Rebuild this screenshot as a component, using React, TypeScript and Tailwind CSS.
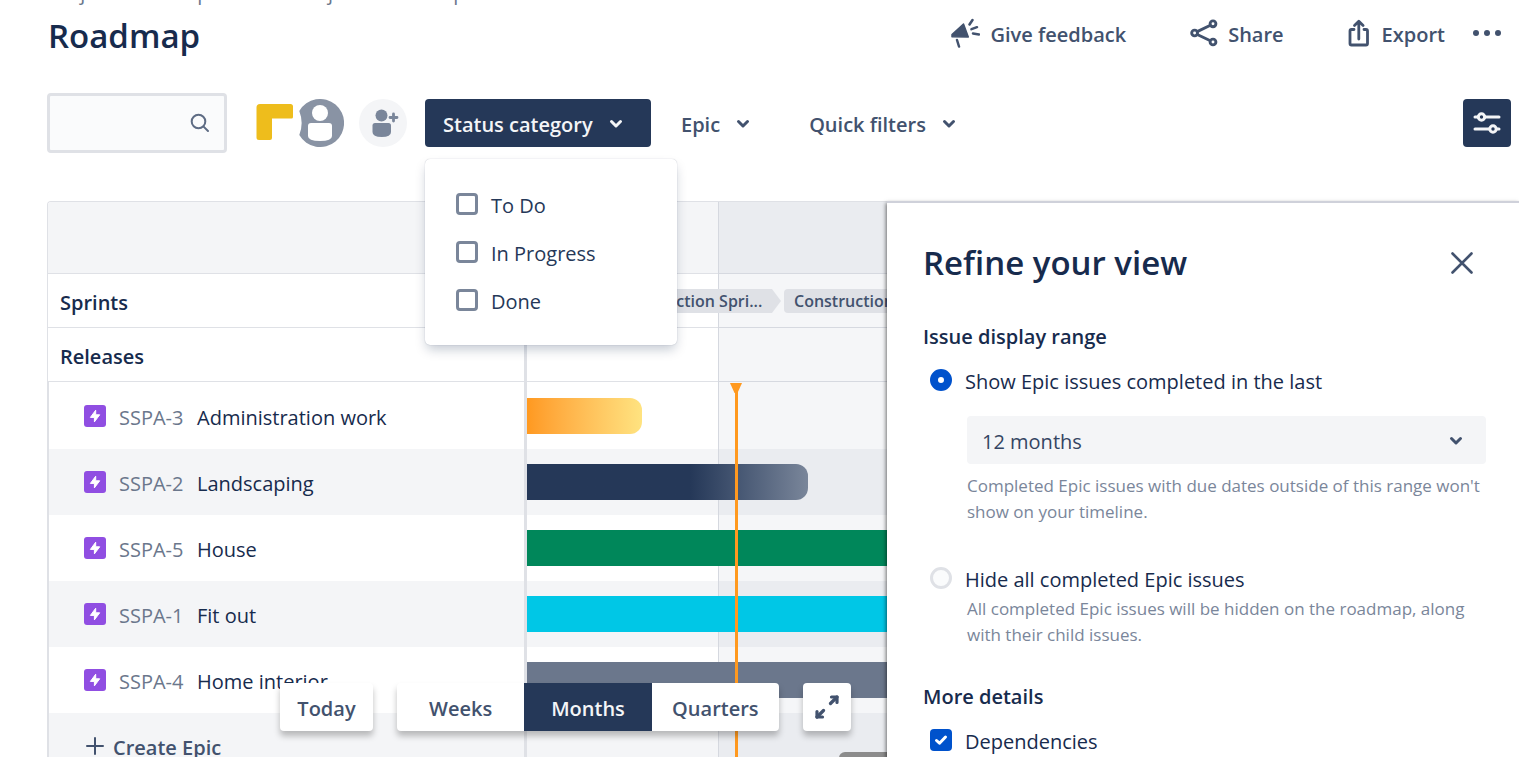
import { useState } from "react";
import type { ReactNode } from "react";

type Epic = { key: string; name: string; bar: string };

const EPICS: Epic[] = [
  { key: "SSPA-3", name: "Administration work", bar: "w-[115px] rounded-r-[12px] bg-linear-to-r from-[#ff991f] to-[#ffe380]" },
  { key: "SSPA-2", name: "Landscaping", bar: "w-[281px] rounded-r-[12px] bg-linear-to-r from-[#253858] from-58% to-[#7a869a]" },
  { key: "SSPA-5", name: "House", bar: "w-full bg-[#00875a]" },
  { key: "SSPA-1", name: "Fit out", bar: "w-full bg-[#00c7e6]" },
  { key: "SSPA-4", name: "Home interior", bar: "w-full bg-[#6b778c]" },
];

const STATUSES = ["To Do", "In Progress", "Done"];

function Chevron({ className = "" }: { className?: string }) {
  return (
    <svg width="14" height="12" viewBox="0 0 14 12" fill="none" stroke="currentColor" strokeWidth="3" strokeLinecap="round" strokeLinejoin="round" className={className} aria-hidden="true">
      <path d="M2.500 4.500 7 9l4.500-4.500" />
    </svg>
  );
}

function Megaphone() {
  return (
    <svg width="30" height="30" viewBox="0 0 30 30" fill="none" stroke="currentColor" strokeWidth="2.500" strokeLinecap="round" aria-hidden="true">
      <path d="M13.500 6 2 16.500v2.200L18.300 19z" fill="currentColor" strokeLinejoin="round" strokeWidth="1.500" />
      <path d="M7 22l2 6.500M19.500 6.500l3-4.500M21.500 11.200l5.500-2M23 15.500l6 .9" />
    </svg>
  );
}

function ShareIcon() {
  return (
    <svg width="28" height="28" viewBox="0 0 28 28" fill="none" stroke="currentColor" strokeWidth="2.900" aria-hidden="true">
      <circle cx="4.600" cy="14" r="2.900" />
      <circle cx="23" cy="4.800" r="2.900" />
      <circle cx="23" cy="23" r="2.900" />
      <path d="M7.200 12.600 20.400 6.200M7.200 15.500l13.200 6.200" />
    </svg>
  );
}

function ExportIcon() {
  return (
    <svg width="22" height="28" viewBox="0 0 22 28" fill="none" stroke="currentColor" strokeWidth="2.800" strokeLinecap="round" strokeLinejoin="round" aria-hidden="true">
      <path d="M6 10.500H3.500A1.500 1.500 0 0 0 2 12v12.500A1.500 1.500 0 0 0 3.500 26h14.500a1.500 1.500 0 0 0 1.500-1.500V12a1.500 1.500 0 0 0-1.500-1.500H16" />
      <path d="M10.800 20V3M6.500 6.500 10.800 2.200l4.300 4.300" />
    </svg>
  );
}

function EpicIcon() {
  return (
    <svg width="22" height="22" viewBox="0 0 22 22" className="shrink-0" aria-hidden="true">
      <rect width="22" height="22" rx="3" fill="#904ee2" />
      <path d="M11.700 5.200v4.600h4L10.400 16.900v-4.500h-4z" fill="#fff" stroke="#fff" strokeWidth="1" strokeLinejoin="round" />
    </svg>
  );
}

function FilterButton({ children }: { children: ReactNode }) {
  return (
    <button type="button" className="flex h-12 items-center gap-4 font-semibold text-[#42526e]">
      <span className="pt-[3px]">{children}</span>
      <Chevron />
    </button>
  );
}

function Header() {
  return (
    <header className="flex h-[60px] items-start pl-12 pr-[18px]">
      <h1 className="mt-3 text-[33px] leading-[48px] font-semibold">Roadmap</h1>
      <div className="mt-[17px] ml-auto flex h-8 items-center font-semibold text-[#42526e]">
        <button type="button" className="flex items-center gap-[10px]"><Megaphone /><span className="pt-[3px]">Give feedback</span></button>
        <button type="button" className="ml-16 flex items-center gap-[10px]"><ShareIcon /><span className="pt-[3px]">Share</span></button>
        <button type="button" className="ml-16 flex items-center gap-3"><ExportIcon /><span className="pt-[3px]">Export</span></button>
        <button type="button" aria-label="More actions" className="ml-7">
          <svg width="28" height="8" viewBox="0 0 28 8" fill="currentColor" aria-hidden="true">
            <circle cx="3" cy="4" r="3" /><circle cx="14" cy="4" r="3" /><circle cx="25" cy="4" r="3" />
          </svg>
        </button>
      </div>
    </header>
  );
}

function StatusFilter() {
  const [checked, setChecked] = useState<string[]>([]);
  const toggle = (s: string) => setChecked((c) => (c.includes(s) ? c.filter((x) => x !== s) : [...c, s]));
  return (
    <div className="relative ml-[18px]">
      <button type="button" aria-expanded="true" className="flex h-12 w-[226px] items-center gap-4 rounded-[4px] bg-[#253858] pl-[18px] font-semibold text-[#f4f5f7]">
        <span className="pt-[3px]">Status category</span>
        <Chevron />
      </button>
      <div className="absolute top-[60px] left-0 z-30 w-[252px] rounded-[5px] bg-white py-[21px] pl-[31px] text-[#253858] shadow-[0_6px_12px_-2px_rgba(9,30,66,0.25),0_0_1px_rgba(9,30,66,0.31)]">
        {STATUSES.map((s) => (
          <label key={s} className="flex h-12 items-center gap-[13px]">
            <input type="checkbox" checked={checked.includes(s)} onChange={() => toggle(s)} className="h-[22px] w-[22px] appearance-none rounded-[4px] border-3 border-[#7a869a] bg-white checked:bg-[#0052cc]" />
            <span className="pt-[3px]">{s}</span>
          </label>
        ))}
      </div>
    </div>
  );
}

function Filters() {
  return (
    <div className="flex h-[60px] items-center pl-[47px] pr-2">
      <label className="flex h-[60px] w-[180px] items-center rounded-[4px] border-3 border-[#dfe1e6] bg-[#fafbfc] pr-[14px] pl-3">
        <input type="search" aria-label="Search roadmap" className="min-w-0 flex-1 bg-transparent outline-none" />
        <svg width="20" height="20" viewBox="0 0 20 20" fill="none" stroke="#5e6c84" strokeWidth="2" strokeLinecap="round" aria-hidden="true">
          <circle cx="8.500" cy="8.500" r="6.800" /><path d="M13.600 13.600 18 18" />
        </svg>
      </label>
      <div className="ml-[29px] flex items-center">
        <svg width="88" height="48" viewBox="0 0 88 48" role="img" aria-label="Assignees">
          <path d="M4 5h30.500a2.500 2.500 0 0 1 2.500 2.500V18a1.500 1.500 0 0 1-1.500 1.500H16V39a2 2 0 0 1-2 2H3a2.500 2.500 0 0 1-2.500-2.500v-30A3.500 3.500 0 0 1 4 5z" fill="#eebd1c" />
          <path d="M43.300 12A24 24 0 1 1 43.300 36Q48 24 43.300 12z" fill="#8993a4" />
          <circle cx="64" cy="14" r="8" fill="#fff" />
          <path d="M52 27a3 3 0 0 1 3-3h18a3 3 0 0 1 3 3v10q0 5-12 5t-12-5z" fill="#fff" />
        </svg>
        <button type="button" aria-label="Add people" className="ml-[15px] grid h-12 w-12 place-items-center rounded-full bg-[#f4f5f7]">
          <svg width="48" height="48" viewBox="0 0 48 48" fill="#7a869a" aria-hidden="true">
            <circle cx="22.500" cy="16.500" r="6" />
            <path d="M13.500 26.500a2.500 2.500 0 0 1 2.500-2.500h13.500a2.500 2.500 0 0 1 2.500 2.500v6.500q0 5-9.250 5t-9.250-5z" />
            <path d="M34.500 15v7M31 18.500h7" stroke="#7a869a" strokeWidth="2.800" strokeLinecap="round" />
          </svg>
        </button>
      </div>
      <StatusFilter />
      <div className="ml-[30px] flex gap-[59px]">
        <FilterButton>Epic</FilterButton>
        <FilterButton>Quick filters</FilterButton>
      </div>
      <button type="button" aria-label="View settings" className="ml-auto grid h-12 w-12 place-items-center rounded-[4px] bg-[#253858]">
        <svg width="28" height="24" viewBox="0 0 28 24" fill="none" stroke="#f4f5f7" strokeWidth="3" aria-hidden="true">
          <path d="M2 6h3M12 6h14M2 18h14.500M23.500 18H26" strokeLinecap="round" />
          <circle cx="8.500" cy="6" r="3.200" /><circle cx="20" cy="18" r="3.200" />
        </svg>
      </button>
    </div>
  );
}

function EpicList() {
  return (
    <div className="w-[477px] shrink-0 overflow-hidden rounded-tl-[4px] border-t border-l border-[#dfe1e6]">
      <div className="h-18 border-b border-[#dfe1e6] bg-[#f4f5f7]" />
      <h2 className="flex h-[54px] items-center border-b border-[#dfe1e6] pl-3 pt-[5px] font-semibold">Sprints</h2>
      <h2 className="flex h-[54px] items-center border-b border-[#dfe1e6] pl-3 pt-[5px] font-semibold">Releases</h2>
      <ul className="border-l border-[#dfe1e6] pt-px">
        {EPICS.map((e) => (
          <li key={e.key} className="flex h-[66px] items-center pl-[35px] even:bg-[#f4f5f7]">
            <EpicIcon />
            <a href="#" className="ml-[13px] w-[78px] pt-[3px] text-[#6b778c]">{e.key}</a>
            <span className="pt-[3px]">{e.name}</span>
          </li>
        ))}
        <li className="h-[66px] bg-[#f4f5f7]">
          <button type="button" className="flex h-full items-center gap-2 pl-9 font-semibold text-[#42526e]">
            <svg width="20" height="20" viewBox="0 0 20 20" stroke="currentColor" strokeWidth="2" strokeLinecap="round" aria-hidden="true">
              <path d="M10 2v16M2 10h16" />
            </svg>
            <span className="pt-[3px]">Create Epic</span>
          </button>
        </li>
      </ul>
    </div>
  );
}

function Timeline() {
  const sprint = "h-6 w-[176px] shrink-0 rounded-l-[4px] bg-[#dfe1e6] pl-[10px] [clip-path:polygon(0_0,calc(100%-9px)_0,100%_50%,calc(100%-9px)_100%,0_100%)]";
  return (
    <div className="relative min-w-0 flex-1 overflow-hidden border-t border-l-3 border-t-[#dfe1e6] border-l-[#dfe1e6]">
      <div className="h-18 border-b border-[#dfe1e6] bg-[#f4f5f7]" />
      <div className="h-[54px] border-b border-[#dfe1e6]" />
      <div className="h-[54px] border-b border-[#dfe1e6]" />
      <div className="absolute inset-y-0 left-[191px] w-full border-l border-[#d5d8df] bg-[rgba(9,30,66,0.04)]" />
      <div className="absolute top-[87px] left-[78px] flex gap-[3px] text-[16px] leading-6 font-semibold whitespace-nowrap text-[#42526e]">
        <span className={sprint}>Construction Spri...</span>
        <span className={sprint}>Construction Spri...</span>
      </div>
      <div className="pt-px">
        {EPICS.map((e) => (
          <div key={e.key} className="flex h-[66px] items-center even:bg-[rgba(9,30,66,0.045)]">
            <div className={`relative h-9 ${e.bar}`} />
          </div>
        ))}
        <div className="h-[66px] bg-[rgba(9,30,66,0.045)]" />
      </div>
      <div className="absolute top-[181px] bottom-0 left-[203px] flex w-3 flex-col items-center">
        <svg width="12" height="12" viewBox="0 0 12 12" className="shrink-0" aria-hidden="true"><path d="M0 0h12L7.500 10h-3z" fill="#ff991f" /></svg>
        <div className="-mt-3 w-[3px] flex-1 bg-[#ff991f]" />
      </div>
      <div className="absolute right-0 top-[550px] h-3 w-12 rounded-tl-[6px] bg-[#8c8c8c]" />
    </div>
  );
}

function RefinePanel() {
  const [hide, setHide] = useState(false);
  const radio = "h-[22px] w-[22px] shrink-0 appearance-none rounded-full border-3 border-[#dfe1e6] bg-[#fafbfc] checked:border-8 checked:border-[#0052cc] checked:bg-white";
  return (
    <aside className="relative z-10 w-[632px] shrink-0 border-t-2 border-[#cfd1da] bg-white pr-[33px] pl-9 shadow-[-1px_2px_4px_rgba(0,0,0,0.55)]">
      <div className="flex items-center pt-9">
        <h2 className="text-[33px] leading-[48px] font-semibold">Refine your view</h2>
        <button type="button" aria-label="Close" className="ml-auto mr-3">
          <svg width="24" height="24" viewBox="0 0 24 24" stroke="#42526e" strokeWidth="2.600" strokeLinecap="round" aria-hidden="true">
            <path d="M2.500 2.500l19 19M21.500 2.500l-19 19" />
          </svg>
        </button>
      </div>
      <h3 className="mt-[34px] leading-8 font-semibold">Issue display range</h3>
      <label className="mt-[11px] flex h-8 items-center gap-[13px] pl-[7px]">
        <input type="radio" name="range" checked={!hide} onChange={() => setHide(false)} className={radio} />
        <span className="pt-[3px]">Show Epic issues completed in the last</span>
      </label>
      <div className="mt-5 pl-11">
        <div className="relative flex items-center">
          <select aria-label="Completed range" className="h-12 w-full appearance-none rounded-[4px] bg-[#f4f5f7] pt-[3px] pl-[15px] text-[#344563]">
            <option>12 months</option>
          </select>
          <Chevron className="pointer-events-none absolute right-[23px] text-[#42526e]" />
        </div>
        <p className="mt-[9px] text-[17px] leading-[26px] text-[#7a869a]">Completed Epic issues with due dates outside of this range won't show on your timeline.</p>
      </div>
      <label className="mt-[37px] flex h-8 items-center gap-[13px] pl-[7px]">
        <input type="radio" name="range" checked={hide} onChange={() => setHide(true)} className={radio} />
        <span className="pt-[3px]">Hide all completed Epic issues</span>
      </label>
      <p className="mt-[2px] pl-11 text-[17px] leading-[26px] text-[#7a869a]">All completed Epic issues will be hidden on the roadmap, along with their child issues.</p>
      <h3 className="mt-[33px] leading-8 font-semibold">More details</h3>
      <label className="mt-[11px] flex h-8 items-center gap-[13px] pl-[7px]">
        <span className="relative grid h-[22px] w-[22px] place-items-center">
          <input type="checkbox" defaultChecked className="peer h-[22px] w-[22px] appearance-none rounded-[4px] border-3 border-[#7a869a] checked:border-0 checked:bg-[#0052cc]" />
          <svg width="22" height="22" viewBox="0 0 22 22" fill="none" stroke="#fff" strokeWidth="3" strokeLinecap="round" strokeLinejoin="round" className="pointer-events-none absolute hidden peer-checked:block" aria-hidden="true">
            <path d="M6.500 11.500 9.500 14.200 15.500 8" />
          </svg>
        </span>
        <span className="pt-[3px]">Dependencies</span>
      </label>
    </aside>
  );
}

function ZoomToolbar() {
  const shadow = "rounded-[4px] bg-white shadow-[0_5px_6px_rgba(0,0,0,0.25)]";
  return (
    <div className="absolute bottom-[26px] left-[280px] z-20 flex h-12 gap-6 font-semibold text-[#42526e]">
      <button type="button" className={`w-[93px] pt-[3px] ${shadow}`}>Today</button>
      <div className={`grid w-[382px] grid-cols-3 overflow-hidden ${shadow}`}>
        <button type="button" className="pt-[3px]">Weeks</button>
        <button type="button" className="bg-[#253858] pt-[3px] text-[#f4f5f7]">Months</button>
        <button type="button" className="pt-[3px]">Quarters</button>
      </div>
      <button type="button" aria-label="Full screen" className={`grid w-12 place-items-center ${shadow}`}>
        <svg width="24" height="24" viewBox="0 0 24 24" fill="none" stroke="currentColor" strokeWidth="3.200" strokeLinecap="round" strokeLinejoin="round" aria-hidden="true">
          <path d="M15.500 8.500 22 2M2 22l6.500-6.500" />
          <path d="M16.500 2H22v5.500M2 16.500V22h5.500" />
        </svg>
      </button>
    </div>
  );
}

export default function App() {
  return (
    <div className="relative flex h-screen flex-col overflow-hidden bg-white font-['Open_Sans','Noto_Sans',sans-serif] text-[20px] leading-8 text-[#172b4d]">
      <nav aria-label="Breadcrumb" className="absolute -top-[23px] left-12 flex gap-2 leading-8 whitespace-nowrap text-[#6b778c]">
        <a href="#">Projects</a><span>/</span><a href="#">Example Scrum Project A</a><span>/</span><a href="#">Example</a>
      </nav>
      <Header />
      <div className="mt-[33px]"><Filters /></div>
      <main className="mt-12 flex min-h-0 flex-1 pl-[47px]">
        <EpicList />
        <Timeline />
        <RefinePanel />
      </main>
      <ZoomToolbar />
    </div>
  );
}
